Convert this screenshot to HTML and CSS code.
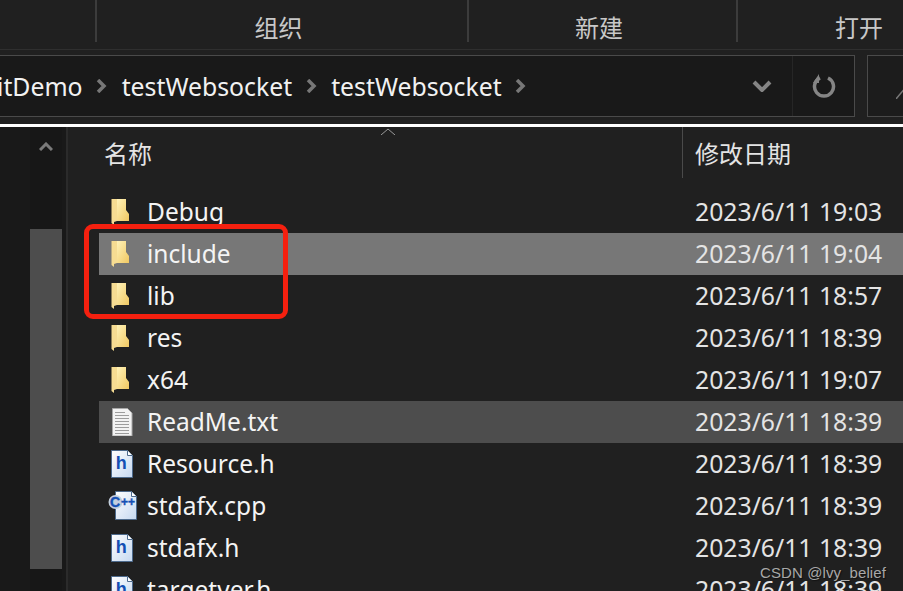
FILE: index.html
```html
<!DOCTYPE html>
<html lang="en">
<head>
  <meta charset="UTF-8">
  <meta name="viewport" content="width=device-width, initial-scale=1.0">
  <title>testWebsocket</title>
  <link rel="stylesheet" href="styles.css">
</head>
<body>
  <svg class="defs" width="0" height="0">
    <defs>
      <linearGradient id="folder-fill" x1="0" y1="0" x2="1" y2="1">
        <stop offset="0" stop-color="#fff2b8"/>
        <stop offset="1" stop-color="#f0c862"/>
      </linearGradient>
      <linearGradient id="page-fill" x1="0" y1="0" x2="1" y2="1">
        <stop offset="0" stop-color="#ffffff"/>
        <stop offset="1" stop-color="#c5d8f0"/>
      </linearGradient>
      <symbol id="icon-folder" viewBox="0 0 24 28">
        <path d="M7 1h9v11l3 4v7H7z" fill="url(#folder-fill)"/>
        <path d="M1.500 1h5.500v22l-3 1v3l-2.500-2z" fill="#f6dc92"/>
      </symbol>
      <symbol id="icon-text" viewBox="0 0 24 28">
        <path d="M2.500 .5h15l4.500 4.500v23h-19.500z" fill="#f2f2f2" stroke="#a8a8a8"/>
        <path d="M5 4.500h10M5 7.500h14M5 10.500h14M5 13.500h14M5 16.500h14M5 19.500h14M5 22.500h14M5 25.500h14" stroke="#9c9c9c"/>
      </symbol>
      <symbol id="icon-h" viewBox="0 0 24 28">
        <path d="M1.500 .5h16l5 5v22h-21z" fill="url(#page-fill)" stroke="#4d6a8c"/>
        <path d="M17.500 .5v5h5" fill="#fff" stroke="#4d6a8c"/>
        <text class="icon-letter" x="5.800" y="19" font-size="18">h</text>
      </symbol>
      <symbol id="icon-cpp" viewBox="0 0 30 30">
        <path d="M7.500 .5h16l5 5v23h-21z" fill="url(#page-fill)" stroke="#4d6a8c"/>
        <path d="M23.500 .5v5h5" fill="#fff" stroke="#4d6a8c"/>
        <circle cx="7.500" cy="11" r="7" fill="#c3cfdf"/>
        <text class="icon-letter icon-heavy" x="2" y="16" font-size="14">C</text>
        <text class="icon-letter icon-heavy" x="13" y="15" font-size="12">++</text>
      </symbol>
    </defs>
  </svg>

  <div class="ribbon">
    <div class="ribbon-group group-first"></div>
    <div class="ribbon-group group-org">组织</div>
    <div class="ribbon-group group-new">新建</div>
    <div class="ribbon-group group-open">打开</div>
  </div>

  <div class="nav-row">
    <div class="address">
      <div class="crumbs">
        <span class="crumb">itDemo</span>
        <svg class="crumb-arrow" viewBox="0 0 12 14"><path d="M2 1l6 6-6 6" /></svg>
        <span class="crumb">testWebsocket</span>
        <svg class="crumb-arrow" viewBox="0 0 12 14"><path d="M2 1l6 6-6 6" /></svg>
        <span class="crumb">testWebsocket</span>
        <svg class="crumb-arrow" viewBox="0 0 12 14"><path d="M2 1l6 6-6 6" /></svg>
      </div>
      <svg class="drop-arrow" viewBox="0 0 20 12"><path d="M2 2l8 8 8-8" /></svg>
      <div class="refresh">
        <svg viewBox="0 0 24 24"><path d="M8 4a9.500 9.500 0 1 0 8 0" /><path class="refresh-head" d="M7 0v9H1z" /></svg>
      </div>
    </div>
    <div class="search">
      <svg viewBox="0 0 10 12"><path d="M0 12L10 0" /></svg>
    </div>
  </div>

  <div class="white-line"></div>

  <div class="main">
    <div class="tree">
      <div class="tree-scroll">
        <svg class="scroll-up" viewBox="0 0 14 9"><path d="M1 8l6-6 6 6" /></svg>
        <div class="scroll-thumb"></div>
      </div>
    </div>
    <div class="list">
      <div class="list-head">
        <svg class="sort-mark" viewBox="0 0 14 7"><path d="M0 7l7-6 7 6" /></svg>
        <div class="col-name">名称</div>
        <div class="col-date">修改日期</div>
      </div>
      <div class="rows">
        <div class="row"><svg class="file-icon"><use href="#icon-folder"/></svg><span class="name">Debug</span><span class="date">2023/6/11 19:03</span></div>
        <div class="row row-hover"><svg class="file-icon"><use href="#icon-folder"/></svg><span class="name">include</span><span class="date">2023/6/11 19:04</span></div>
        <div class="row"><svg class="file-icon"><use href="#icon-folder"/></svg><span class="name">lib</span><span class="date">2023/6/11 18:57</span></div>
        <div class="row"><svg class="file-icon"><use href="#icon-folder"/></svg><span class="name">res</span><span class="date">2023/6/11 18:39</span></div>
        <div class="row"><svg class="file-icon"><use href="#icon-folder"/></svg><span class="name">x64</span><span class="date">2023/6/11 19:07</span></div>
        <div class="row row-selected"><svg class="file-icon"><use href="#icon-text"/></svg><span class="name">ReadMe.txt</span><span class="date">2023/6/11 18:39</span></div>
        <div class="row"><svg class="file-icon"><use href="#icon-h"/></svg><span class="name">Resource.h</span><span class="date">2023/6/11 18:39</span></div>
        <div class="row"><svg class="file-icon icon-wide"><use href="#icon-cpp"/></svg><span class="name">stdafx.cpp</span><span class="date">2023/6/11 18:39</span></div>
        <div class="row"><svg class="file-icon"><use href="#icon-h"/></svg><span class="name">stdafx.h</span><span class="date">2023/6/11 18:39</span></div>
        <div class="row"><svg class="file-icon"><use href="#icon-h"/></svg><span class="name">targetver.h</span><span class="date">2023/6/11 18:39</span></div>
      </div>
    </div>
  </div>

  <div class="red-box"></div>
  <div class="watermark">CSDN @lvy_belief</div>
</body>
</html>
```

FILE: styles.css
```css
html, body {
  height: 100%;
}

body {
  margin: 0;
  overflow: hidden;
  background-color: #202020;
  color: #f0f0f0;
  font-family: "Noto Sans", "Noto Sans CJK SC", sans-serif;
  font-size: 25px;
}

.defs {
  position: absolute;
}

.icon-letter {
  fill: #1450b4;
  font-family: "Liberation Sans", sans-serif;
  font-weight: bold;
}

.icon-heavy {
  stroke: #1450b4;
  stroke-width: .4;
}

/* ribbon */
.ribbon {
  display: flex;
  height: 50px;
  border-bottom: 1px solid #2f2f2f;
  box-sizing: border-box;
  color: #c8c8c8;
  font-family: "Noto Sans CJK SC", sans-serif;
  font-size: 24px;
}

.ribbon-group {
  height: 42px;
  line-height: 54px;
  text-align: center;
  border-right: 2px solid #3c3c3c;
  box-sizing: border-box;
}

.group-first { width: 97px; }
.group-org { width: 372px; padding-right: 7px; }
.group-new { width: 269px; padding-right: 7px; }
.group-open { flex: 1; border-right: none; padding-left: 77px; }

/* address bar */
.nav-row {
  display: flex;
  gap: 12px;
  padding-top: 5px;
  height: 66px;
  box-sizing: border-box;
}

.address {
  display: flex;
  align-items: center;
  width: 855px;
  height: 62px;
  flex-shrink: 0;
  box-sizing: border-box;
  border: 1px solid #4a4a4a;
  border-left: none;
  background-color: #191919;
}

.crumbs {
  display: flex;
  align-items: center;
  flex: 1;
  min-width: 0;
  margin-left: -3px;
  color: #f2f2f2;
  font-size: 24.800px;
}

.crumb-arrow {
  width: 12px;
  height: 14px;
  margin: 0 13.500px;
  flex-shrink: 0;
}

.crumb-arrow path {
  fill: none;
  stroke: #777;
  stroke-width: 3.500;
}

.drop-arrow {
  width: 20px;
  height: 12px;
  margin-right: 20px;
}

.drop-arrow path {
  fill: none;
  stroke: #858585;
  stroke-width: 4;
}

.refresh {
  display: flex;
  align-items: center;
  justify-content: center;
  width: 62px;
  height: 100%;
  border-left: 1px solid #262626;
  box-sizing: border-box;
}

.refresh svg {
  width: 24px;
  height: 24px;
}

.refresh path {
  fill: none;
  stroke: #858585;
  stroke-width: 3.500;
}

.refresh .refresh-head {
  fill: #858585;
  stroke: none;
}

.search {
  flex: 1;
  height: 62px;
  box-sizing: border-box;
  border: 1px solid #4a4a4a;
  border-right: none;
  background-color: #1c1c1c;
  padding: 31px 0 0 28px;
}

.search svg {
  display: block;
  width: 10px;
  height: 12px;
}

.search path {
  fill: none;
  stroke: #777;
  stroke-width: 1.500;
}

.white-line {
  height: 3px;
  margin-top: 8px;
  background-color: #fff;
}

/* tree and list */
.main {
  display: flex;
  height: 464px;
}

.tree {
  width: 66px;
  flex-shrink: 0;
  background-color: #191919;
  border-right: 2px solid #2b2b2b;
}

.tree-scroll {
  display: flex;
  flex-direction: column;
  align-items: center;
  width: 32px;
  height: 100%;
  margin-left: 30px;
  background-color: #171717;
}

.scroll-up {
  width: 14px;
  height: 9px;
  margin-top: 15px;
}

.scroll-up path {
  fill: none;
  stroke: #7a7a7a;
  stroke-width: 3;
}

.scroll-thumb {
  align-self: stretch;
  height: 340px;
  margin-top: 78px;
  background-color: #4d4d4d;
}

.list {
  flex: 1;
  position: relative;
}

.sort-mark {
  position: absolute;
  left: 313px;
  top: 1px;
  width: 14px;
  height: 7px;
  fill: none;
  stroke: #9a9a9a;
}

.list-head {
  display: flex;
  height: 64px;
  padding-left: 37px;
  color: #e4e4e4;
  font-family: "Noto Sans CJK SC", sans-serif;
  font-size: 24px;
}

.col-name {
  width: 577px;
  height: 51px;
  line-height: 51px;
  margin-left: -1px;
  padding-right: 1px;
  border-right: 1px solid #4a4a4a;
}

.col-date {
  padding-left: 12px;
  height: 51px;
  line-height: 51px;
}

.rows {
  margin-left: 31px;
}

.row {
  display: flex;
  align-items: center;
  height: 42px;
}

.row-hover {
  background-color: #777;
}

.row-selected {
  background-color: #4d4d4d;
}

.file-icon {
  width: 24px;
  height: 28px;
  margin-left: 11px;
  flex-shrink: 0;
}

.icon-wide {
  width: 30px;
  height: 30px;
  margin-left: 9px;
  margin-right: -4px;
}

.name {
  width: 548px;
  margin-left: 13px;
  padding-bottom: 2px;
  flex-shrink: 0;
  color: #f4f4f4;
  font-size: 24.500px;
}

.date {
  padding-bottom: 2px;
  color: #e4e4e4;
  font-size: 24.750px;
}

/* annotation over the list */
.red-box {
  position: absolute;
  left: 84px;
  top: 224px;
  width: 204px;
  height: 95px;
  box-sizing: border-box;
  border: 5px solid #f5200f;
  border-radius: 9px;
}

.watermark {
  position: absolute;
  right: 17px;
  top: 564px;
  color: #a8a8a8;
  font-family: "Liberation Sans", sans-serif;
  font-size: 15px;
  letter-spacing: .1px;
  text-shadow: 1px 1px 1px #111;
}
```
